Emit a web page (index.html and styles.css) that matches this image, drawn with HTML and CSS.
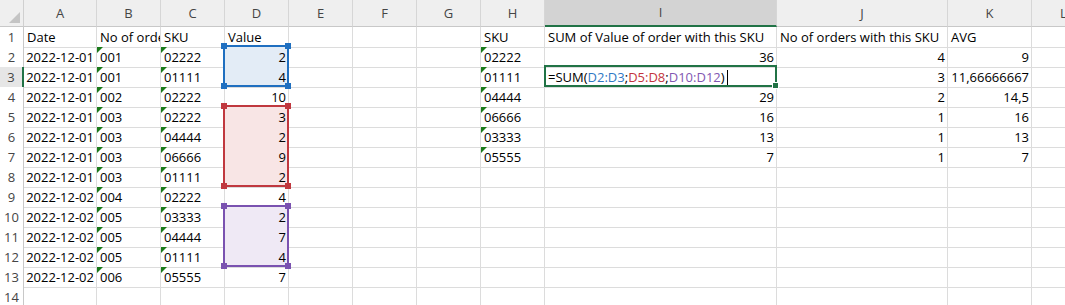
FILE: index.html
```html
<!DOCTYPE html>
<html>
<head>
<meta charset="utf-8">
<link rel="stylesheet" href="styles.css">
</head>
<body>
<div class="sheet">
  <div class="row head">
    <div class="corner"><span class="corner-tri"></span></div>
    <div class="ch">A</div><div class="ch">B</div><div class="ch">C</div><div class="ch">D</div><div class="ch">E</div><div class="ch">F</div><div class="ch">G</div><div class="ch">H</div><div class="ch sel">I</div><div class="ch">J</div><div class="ch">K</div><div class="ch">L</div>
  </div>
  <div class="row">
    <div class="rh">1</div>
    <div class="c t">Date</div><div class="c t">No of orders</div><div class="c t">SKU</div><div class="c t">Value</div><div class="c"></div><div class="c"></div><div class="c"></div><div class="c t">SKU</div><div class="c t">SUM of Value of order with this SKU</div><div class="c t">No of orders with this SKU</div><div class="c t">AVG</div><div class="c"></div>
  </div>
  <div class="row">
    <div class="rh">2</div>
    <div class="c n">2022-12-01</div><div class="c t tri">001</div><div class="c t tri">02222</div><div class="c n blue">2</div><div class="c"></div><div class="c"></div><div class="c"></div><div class="c t tri">02222</div><div class="c n">36</div><div class="c n">4</div><div class="c n">9</div><div class="c"></div>
  </div>
  <div class="row">
    <div class="rh act">3</div>
    <div class="c n">2022-12-01</div><div class="c t tri">001</div><div class="c t tri">01111</div><div class="c n blue">4</div><div class="c"></div><div class="c"></div><div class="c"></div><div class="c t tri">01111</div><div class="c t formula">=SUM(<span class="fb">D2:D3</span>;<span class="fr">D5:D8</span>;<span class="fp">D10:D12</span>)<span class="caret"></span></div><div class="c n">3</div><div class="c n">11,66666667</div><div class="c"></div>
  </div>
  <div class="row">
    <div class="rh">4</div>
    <div class="c n">2022-12-01</div><div class="c t tri">002</div><div class="c t tri">02222</div><div class="c n">10</div><div class="c"></div><div class="c"></div><div class="c"></div><div class="c t tri">04444</div><div class="c n">29</div><div class="c n">2</div><div class="c n">14,5</div><div class="c"></div>
  </div>
  <div class="row">
    <div class="rh">5</div>
    <div class="c n">2022-12-01</div><div class="c t tri">003</div><div class="c t tri">02222</div><div class="c n red">3</div><div class="c"></div><div class="c"></div><div class="c"></div><div class="c t tri">06666</div><div class="c n">16</div><div class="c n">1</div><div class="c n">16</div><div class="c"></div>
  </div>
  <div class="row">
    <div class="rh">6</div>
    <div class="c n">2022-12-01</div><div class="c t tri">003</div><div class="c t tri">04444</div><div class="c n red">2</div><div class="c"></div><div class="c"></div><div class="c"></div><div class="c t tri">03333</div><div class="c n">13</div><div class="c n">1</div><div class="c n">13</div><div class="c"></div>
  </div>
  <div class="row">
    <div class="rh">7</div>
    <div class="c n">2022-12-01</div><div class="c t tri">003</div><div class="c t tri">06666</div><div class="c n red">9</div><div class="c"></div><div class="c"></div><div class="c"></div><div class="c t tri">05555</div><div class="c n">7</div><div class="c n">1</div><div class="c n">7</div><div class="c"></div>
  </div>
  <div class="row">
    <div class="rh">8</div>
    <div class="c n">2022-12-01</div><div class="c t tri">003</div><div class="c t tri">01111</div><div class="c n red">2</div><div class="c"></div><div class="c"></div><div class="c"></div><div class="c"></div><div class="c"></div><div class="c"></div><div class="c"></div><div class="c"></div>
  </div>
  <div class="row">
    <div class="rh">9</div>
    <div class="c n">2022-12-02</div><div class="c t tri">004</div><div class="c t tri">02222</div><div class="c n">4</div><div class="c"></div><div class="c"></div><div class="c"></div><div class="c"></div><div class="c"></div><div class="c"></div><div class="c"></div><div class="c"></div>
  </div>
  <div class="row">
    <div class="rh">10</div>
    <div class="c n">2022-12-02</div><div class="c t tri">005</div><div class="c t tri">03333</div><div class="c n purple">2</div><div class="c"></div><div class="c"></div><div class="c"></div><div class="c"></div><div class="c"></div><div class="c"></div><div class="c"></div><div class="c"></div>
  </div>
  <div class="row">
    <div class="rh">11</div>
    <div class="c n">2022-12-02</div><div class="c t tri">005</div><div class="c t tri">04444</div><div class="c n purple">7</div><div class="c"></div><div class="c"></div><div class="c"></div><div class="c"></div><div class="c"></div><div class="c"></div><div class="c"></div><div class="c"></div>
  </div>
  <div class="row">
    <div class="rh">12</div>
    <div class="c n">2022-12-02</div><div class="c t tri">005</div><div class="c t tri">01111</div><div class="c n purple">4</div><div class="c"></div><div class="c"></div><div class="c"></div><div class="c"></div><div class="c"></div><div class="c"></div><div class="c"></div><div class="c"></div>
  </div>
  <div class="row">
    <div class="rh">13</div>
    <div class="c n">2022-12-02</div><div class="c t tri">006</div><div class="c t tri">05555</div><div class="c n">7</div><div class="c"></div><div class="c"></div><div class="c"></div><div class="c"></div><div class="c"></div><div class="c"></div><div class="c"></div><div class="c"></div>
  </div>
  <div class="row">
    <div class="rh">14</div>
    <div class="c"></div><div class="c"></div><div class="c"></div><div class="c"></div><div class="c"></div><div class="c"></div><div class="c"></div><div class="c"></div><div class="c"></div><div class="c"></div><div class="c"></div><div class="c"></div>
  </div>

  <div class="range range-blue"><i class="h tl"></i><i class="h tr"></i><i class="h bl"></i><i class="h br"></i></div>
  <div class="range range-red"><i class="h tl"></i><i class="h tr"></i><i class="h bl"></i><i class="h br"></i></div>
  <div class="range range-purple"><i class="h tl"></i><i class="h tr"></i><i class="h bl"></i><i class="h br"></i></div>
  <div class="active"><i class="fill-handle"></i></div>
</div>
</body>
</html>
```
FILE: styles.css
```css
html, body {
  margin: 0;
  padding: 0;
  background: #ffffff;
  overflow: hidden;
  width: 1065px;
  height: 305px;
}

.sheet {
  position: relative;
  width: 1096px;
  font-family: "Open Sans", "Liberation Sans", sans-serif;
  font-size: 13px;
  color: #000;
}

.row {
  display: grid;
  grid-template-columns: 24px 73px repeat(7, 64px) 232px 171px 84px 64px;
  height: 20px;
}

.row.head {
  height: 27px;
  background: #efefef;
}

.corner {
  position: relative;
  border-right: 1px solid #d0d0d0;
  border-bottom: 1px solid #c8c8c8;
}
.corner-tri {
  position: absolute;
  right: 3px;
  bottom: 3px;
  width: 0;
  height: 0;
  border-left: 11px solid transparent;
  border-bottom: 11px solid #c4c4c4;
}

.ch {
  box-sizing: border-box;
  border-right: 1px solid #d6d6d6;
  border-bottom: 1px solid #c8c8c8;
  text-align: center;
  line-height: 26px;
  color: #454545;
}
.ch.sel {
  background: #d3d3d3;
  border-bottom: 2px solid #217346;
  line-height: 25px;
}

.rh {
  box-sizing: border-box;
  border-right: 1px solid #c8c8c8;
  border-bottom: 1px solid #d6d6d6;
  text-align: center;
  line-height: 20px;
  color: #454545;
  background: #ffffff;
}
.rh.act {
  background: #e6e6e6;
  border-right: 2px solid #217346;
}

.c {
  position: relative;
  box-sizing: border-box;
  border-right: 1px solid #dcdcdc;
  border-bottom: 1px solid #dcdcdc;
  line-height: 20px;
  white-space: nowrap;
  overflow: hidden;
}
.t { text-align: left; padding-left: 3px; }
.n { text-align: right; padding-right: 2px; }

.tri::before {
  content: "";
  position: absolute;
  left: 0;
  top: 0;
  width: 0;
  height: 0;
  border-top: 6px solid #1a7a1a;
  border-right: 6px solid transparent;
}

.blue { background: #e3ecf6; }
.red { background: #f8e5e5; }
.purple { background: #efe9f5; }

.formula { overflow: visible; }
.fb { color: #2f78c4; }
.fr { color: #c4343d; }
.fp { color: #8257b2; }
.caret {
  display: inline-block;
  width: 1px;
  height: 15px;
  background: #000;
  margin-left: 2px;
  vertical-align: -3px;
}

.range {
  position: absolute;
  left: 223px;
  width: 66px;
  box-sizing: border-box;
  border: 2px solid;
}
.range-blue { top: 45px; height: 42px; border-color: #1f6fc0; color: #1f6fc0; }
.range-red { top: 105px; height: 82px; border-color: #c0383f; color: #c0383f; }
.range-purple { top: 205px; height: 62px; border-color: #7a52b0; color: #7a52b0; }

.h {
  position: absolute;
  width: 6px;
  height: 6px;
  background: currentColor;
}
.h.tl { left: -4px; top: -4px; }
.h.tr { right: -4px; top: -4px; }
.h.bl { left: -4px; bottom: -4px; }
.h.br { right: -4px; bottom: -4px; }

.active {
  position: absolute;
  left: 544px;
  top: 65px;
  width: 233px;
  height: 22px;
  box-sizing: border-box;
  border: 2px solid #217346;
}
.fill-handle {
  position: absolute;
  right: -4px;
  bottom: -4px;
  width: 5px;
  height: 5px;
  background: #217346;
  border: 1px solid #fff;
}
```
